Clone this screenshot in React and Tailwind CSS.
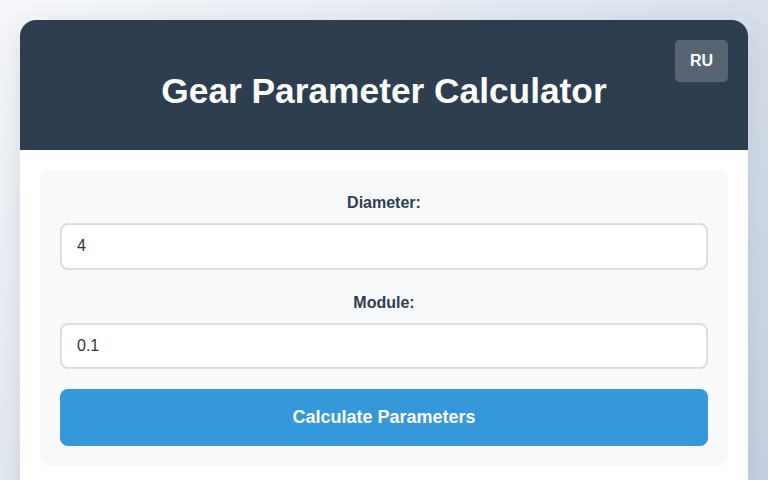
export default function App() {
  return (
    <div
      className="min-h-screen p-5 bg-[linear-gradient(135deg,#f5f7fa_0%,#c3cfe2_100%)]"
      style={{ fontFamily: '"Liberation Sans", Arial, sans-serif' }}
    >
      <div className="bg-white rounded-[16px] overflow-hidden shadow-[0_10px_30px_rgba(0,0,0,0.1)]">
        <div className="relative bg-[#2c3e50] h-[130px] flex items-center justify-center">
          <h1 className="text-white text-[35.3px] font-bold leading-[40px] mt-3">Gear Parameter Calculator</h1>
          <button className="absolute top-5 right-5 w-[53px] h-[42px] rounded-[5px] bg-[rgba(255,255,255,0.2)] text-white font-bold text-base">
            RU
          </button>
        </div>
        <div className="p-5 pb-16">
          <div className="bg-[#f8f9fa] rounded-[10px] p-5">
            <div className="mb-5">
              <label className="block text-center font-bold text-base leading-6 text-[#2c3e50] pt-px mb-[8px]">Diameter:</label>
              <input
                defaultValue="4"
                className="block w-full h-[46.5px] px-[15px] border-2 border-[#ddd] rounded-[8px] bg-white text-base text-[#333] outline-none"
              />
            </div>
            <div className="mb-5">
              <label className="block text-center font-bold text-base leading-6 text-[#2c3e50] pt-px mb-[8px]">Module:</label>
              <input
                defaultValue="0.1"
                className="block w-full h-[46.5px] px-[15px] border-2 border-[#ddd] rounded-[8px] bg-white text-base text-[#333] outline-none"
              />
            </div>
            <button className="block w-full h-[57px] rounded-[8px] bg-[#3498db] text-white font-bold text-[18px]">
              Calculate Parameters
            </button>
          </div>
        </div>
      </div>
    </div>
  );
}
